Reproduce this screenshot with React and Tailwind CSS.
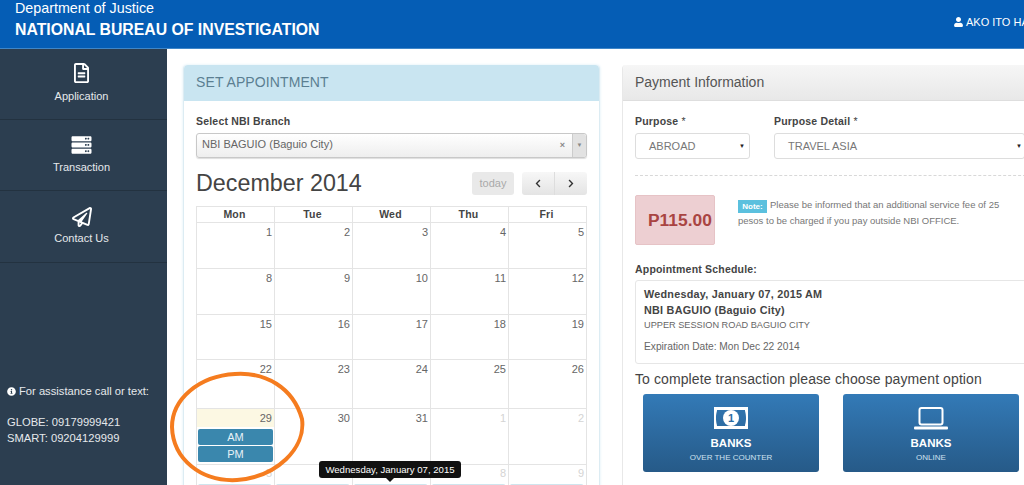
import React from "react";
import { FaUser, FaInfoCircle, FaRegFileAlt, FaServer, FaRegPaperPlane, FaChevronLeft, FaChevronRight } from "react-icons/fa";

const weeks = [
  { h: "h-[46px]", days: ["1", "2", "3", "4", "5"] },
  { h: "h-[46px]", days: ["8", "9", "10", "11", "12"] },
  { h: "h-[45px]", days: ["15", "16", "17", "18", "19"] },
  { h: "h-[49px]", days: ["22", "23", "24", "25", "26"] },
];

function NavItem({ icon, label, h }) {
  return (
    <div className={`flex flex-col items-center border-b border-[#233240] pr-[4px] ${h}`}>
      {icon}
      <span className="text-[11px] leading-[14px] text-[#e6e9ec]">{label}</span>
    </div>
  );
}

export default function App() {
  return (
    <div className="relative w-[1024px] h-[485px] overflow-hidden bg-white font-['Liberation_Sans',Arial,sans-serif] text-[#444]">
      <header className="h-[49px] bg-[#055db5] border-b border-[#3f86c8] flex justify-between text-white">
        <div className="pl-[15px]">
          <div className="text-[14.3px] leading-[16px]">Department of Justice</div>
          <div className="text-[15.8px] leading-[20px] font-bold mt-[4px]">NATIONAL BUREAU OF INVESTIGATION</div>
        </div>
        <div className="flex items-center gap-[3px] pb-[4px] text-[11px] w-[70px] whitespace-nowrap overflow-hidden shrink-0">
          <FaUser className="w-[9px] h-[10px] shrink-0" />
          <span>AKO ITO HA</span>
        </div>
      </header>

      <div className="flex h-[436px]">
        <aside className="w-[167px] shrink-0 bg-[#2c3e50] flex flex-col">
          <NavItem h="h-[71px] pt-[14px] gap-[6px]" label="Application" icon={<FaRegFileAlt className="w-[17px] h-[20px] text-white" />} />
          <NavItem h="h-[71px] pt-[15px] gap-[5px]" label="Transaction" icon={<FaServer className="w-[21px] h-[20px] text-white" />} />
          <NavItem h="h-[72px] pt-[16px] gap-[4px]" label="Contact Us" icon={<FaRegPaperPlane className="w-[20px] h-[20px] text-white" />} />
          <div className="pl-[7px] pt-[121px] text-[11.2px] text-[#e6e9ec]">
            <div className="flex items-center gap-[3px] leading-[14px]">
              <FaInfoCircle className="w-[9px] h-[9px] text-white shrink-0" />
              <span>For assistance call or text:</span>
            </div>
            <div className="mt-[16px] leading-[16px]">GLOBE: 09179999421</div>
            <div className="leading-[16px]">SMART: 09204129999</div>
          </div>
        </aside>

        <main className="flex-1 flex gap-[22px] pl-[16px] pt-[16px] min-w-0">
          <section className="w-[417px] shrink-0 h-[440px] rounded-t-[4px] border-x border-[#dcecf3] shadow-[0_0_3px_#d9edf7]">
            <div className="h-[36px] bg-[#c9e5f1] rounded-t-[4px] pl-[12px] text-[14px] leading-[35px] tracking-[0.1px] text-[#5b7f92]">SET APPOINTMENT</div>
            <div className="px-[12px] pt-[14px]">
              <div className="text-[10.5px] leading-[12px] font-bold tracking-[0.2px] text-[#444]">Select NBI Branch</div>
              <div className="mt-[6px] h-[25px] w-[391px] rounded-[3px] border border-[#c8c8c8] bg-gradient-to-b from-white to-[#eeeeee] flex items-center justify-between text-[11px] text-[#666] pl-[5px] shadow-[0_1px_1px_#ddd]">
                <span className="pb-[2px]">NBI BAGUIO (Baguio City)</span>
                <div className="flex items-center h-full">
                  <span className="text-[9px] font-bold text-[#888] pr-[7px]">×</span>
                  <div className="w-[14px] h-full bg-[#e2e2e2] border-l border-[#ccc] rounded-r-[3px] flex items-center justify-center text-[6px] text-[#888]">▼</div>
                </div>
              </div>
              <div className="mt-[8px] w-[391px] h-[34px] flex items-center justify-between">
                <h2 className="text-[23.3px] leading-[34px] text-[#444]">December 2014</h2>
                <div className="flex gap-[8px] items-center">
                  <div className="w-[42px] h-[23px] rounded-[3px] bg-[#e9e9e9] text-[11px] leading-[23px] text-center text-[#aaa]">today</div>
                  <div className="w-[65px] h-[23px] rounded-[3px] bg-gradient-to-b from-[#f7f7f7] to-[#e4e4e4] flex text-[#333]">
                    <div className="flex-1 flex items-center justify-center border-r border-[#ddd]"><FaChevronLeft className="w-[8px] h-[9px]" /></div>
                    <div className="flex-1 flex items-center justify-center"><FaChevronRight className="w-[8px] h-[9px]" /></div>
                  </div>
                </div>
              </div>

              <div className="mt-[6px] w-[391px] border-t border-l border-[#e4e4e4]">
                <div className="grid grid-cols-5 h-[16px] border-b border-[#e4e4e4]">
                  {["Mon", "Tue", "Wed", "Thu", "Fri"].map((d) => (
                    <div key={d} className="border-r border-[#e4e4e4] text-center pr-[2px] text-[10.5px] leading-[15px] font-bold tracking-[0.2px] text-[#444]">{d}</div>
                  ))}
                </div>
                {weeks.map((w) => (
                  <div key={w.days[0]} className={`grid grid-cols-5 ${w.h} border-b border-[#e4e4e4]`}>
                    {w.days.map((n) => (
                      <div key={n} className="border-r border-[#e4e4e4] text-right pr-[2px] pt-[1px] text-[11px] leading-[17px] text-[#666]">{n}</div>
                    ))}
                  </div>
                ))}
                <div className="grid grid-cols-5 h-[56px] border-b border-[#e4e4e4]">
                  <div className="border-r border-[#e4e4e4]">
                    <div className="h-[18px] bg-[#fcf8e3] text-right pr-[2px] text-[11px] leading-[18px] text-[#666]">29</div>
                    <div className="mx-[1px] mt-[2px] h-[16px] rounded-[2px] bg-[#3a87ad] text-center text-[11px] leading-[16px] text-[#e8f2f7]">AM</div>
                    <div className="mx-[1px] mt-[1px] h-[16px] rounded-[2px] bg-[#3a87ad] text-center text-[11px] leading-[16px] text-[#e8f2f7]">PM</div>
                  </div>
                  {["30", "31"].map((n) => (
                    <div key={n} className="border-r border-[#e4e4e4] text-right pr-[2px] pt-[1px] text-[11px] leading-[17px] text-[#666]">{n}</div>
                  ))}
                  {["1", "2"].map((n) => (
                    <div key={n} className="border-r border-[#e4e4e4] text-right pr-[2px] pt-[1px] text-[11px] leading-[17px] text-[#d4d4d4]">{n}</div>
                  ))}
                </div>
                <div className="grid grid-cols-5 h-[30px]">
                  {["5", "", "", "8", "9"].map((n, i) => (
                    <div key={i} className="border-r border-[#e4e4e4] text-right pr-[2px] text-[11px] leading-[17px] h-[30px] text-[#d4d4d4]">
                      <div className="h-[17px]">{n}</div>
                      <div className="mx-[1px] mt-[2px] h-[4px] border-t border-x border-[#cfe5ee] rounded-t-[2px]"></div>
                    </div>
                  ))}
                </div>
              </div>
            </div>
          </section>

          <section className="w-[420px] shrink-0 h-[440px] rounded-t-[4px] border-x border-[#e8e8e8]">
            <div className="h-[36px] bg-gradient-to-b from-[#f6f6f6] to-[#e8e8e8] border-b border-[#dedede] rounded-t-[4px] pl-[12px] text-[14px] leading-[35px] text-[#555]">Payment Information</div>
            <div className="pl-[12px] pt-[14px]">
              <div className="flex gap-[24px]">
                <div>
                  <div className="text-[10.5px] leading-[12px] font-bold tracking-[0.2px] text-[#444]">Purpose <span className="font-normal">*</span></div>
                  <div className="mt-[6px] w-[115px] h-[26px] rounded-[3px] border border-[#ddd] flex items-center justify-between pl-[13px] pr-[4px] text-[11px] text-[#777]">
                    <span>ABROAD</span><span className="text-[6px] text-[#222]">▼</span>
                  </div>
                </div>
                <div>
                  <div className="text-[10.5px] leading-[12px] font-bold tracking-[0.2px] text-[#444]">Purpose Detail <span className="font-normal">*</span></div>
                  <div className="mt-[6px] w-[251px] h-[26px] rounded-[3px] border border-[#ddd] flex items-center justify-between pl-[13px] pr-[2px] text-[11px] text-[#777]">
                    <span>TRAVEL ASIA</span><span className="text-[6px] text-[#222]">▼</span>
                  </div>
                </div>
              </div>
              <div className="mt-[16px] border-t border-dashed border-[#d8d8d8]"></div>
              <div className="mt-[19px] flex">
                <div className="w-[80px] h-[50px] shrink-0 rounded-[2px] bg-[#edcfd2] border border-[#e6c3c6] text-[17.4px] leading-[48px] font-bold text-[#a94442] pl-[12px]">P115.00</div>
                <div className="ml-[23px] w-[270px] pt-[2px] text-[9.5px] leading-[16px] text-[#777]">
                  <span className="inline-block w-[29px] h-[13px] bg-[#5bc0de] text-white font-bold text-[8px] leading-[13px] text-center mr-[3px] align-[-1px]">Note:</span>
                  Please be informed that an additional service fee of 25 pesos to be charged if you pay outside NBI OFFICE.
                </div>
              </div>
              <div className="mt-[18px] text-[10.5px] leading-[12px] font-bold tracking-[0.2px] text-[#444]">Appointment Schedule:</div>
              <div className="mt-[5px] w-[400px] h-[84px] rounded-[3px] border border-[#e6e6e6] pl-[8px] pt-[5px]">
                <div className="text-[10.8px] leading-[16px] font-bold tracking-[0.25px] text-[#444]">Wednesday, January 07, 2015 AM</div>
                <div className="text-[10.8px] leading-[16px] font-bold tracking-[0.25px] text-[#444]">NBI BAGUIO (Baguio City)</div>
                <div className="text-[9.2px] leading-[15px] text-[#666]">UPPER SESSION ROAD BAGUIO CITY</div>
                <div className="mt-[6px] text-[10.2px] leading-[16px] text-[#666]">Expiration Date: Mon Dec 22 2014</div>
              </div>
              <div className="mt-[5px] text-[14px] leading-[20px] tracking-[0.1px] text-[#444]">To complete transaction please choose payment option</div>
              <div className="mt-[5px] ml-[8px] flex gap-[24px]">
                <div className="w-[176px] h-[78px] rounded-[3px] bg-gradient-to-b from-[#337ab7] to-[#265a88] flex flex-col items-center text-white pt-[13px]">
                  <svg width="34" height="22" viewBox="0 0 34 22"><path fill="#fff" fillRule="evenodd" d="M0 0h34v22H0zM3 3c0 2-1 3-1 8s1 6 1 8h28c0-2 1-3 1-8s-1-6-1-8z" /><circle cx="17" cy="11" r="8" fill="#fff" /><text x="17" y="15" textAnchor="middle" fontSize="11" fontWeight="bold" fill="#2a6ba3" fontFamily="Liberation Sans">1</text></svg>
                  <div className="mt-[7px] text-[11.5px] leading-[14px] font-bold">BANKS</div>
                  <div className="mt-[1px] text-[8px] leading-[14px] text-[#cfe0ef]">OVER THE COUNTER</div>
                </div>
                <div className="w-[176px] h-[78px] rounded-[3px] bg-gradient-to-b from-[#337ab7] to-[#265a88] flex flex-col items-center text-white pt-[13px]">
                  <svg width="34" height="23" viewBox="0 0 34 23" fill="none"><rect x="5.5" y="1" width="23" height="16.5" rx="2" stroke="#fff" strokeWidth="2" /><rect x="0" y="19.5" width="34" height="3" rx="1" fill="#fff" /></svg>
                  <div className="mt-[6px] text-[11.5px] leading-[14px] font-bold">BANKS</div>
                  <div className="mt-[1px] text-[8px] leading-[14px] text-[#cfe0ef]">ONLINE</div>
                </div>
              </div>
            </div>
          </section>
        </main>
      </div>

      <div className="absolute left-[319px] top-[461px] w-[142px] h-[17px] rounded-[3px] bg-[#111] text-white text-[9.6px] leading-[17px] text-center">Wednesday, January 07, 2015</div>
      <div className="absolute left-[386px] top-[478px] w-0 h-0 border-x-[4px] border-x-transparent border-t-[4px] border-t-[#111]"></div>

      <svg className="absolute left-[165px] top-[368px]" width="145" height="117" viewBox="0 0 145 117" fill="none">
        <path d="M70 6C100 4 128 19 137 51C141 80 112 109 72 112C36 114 8 91 7 59C7 31 34 8 70 6Z" stroke="#f57c1f" strokeWidth="4" />
      </svg>
    </div>
  );
}
